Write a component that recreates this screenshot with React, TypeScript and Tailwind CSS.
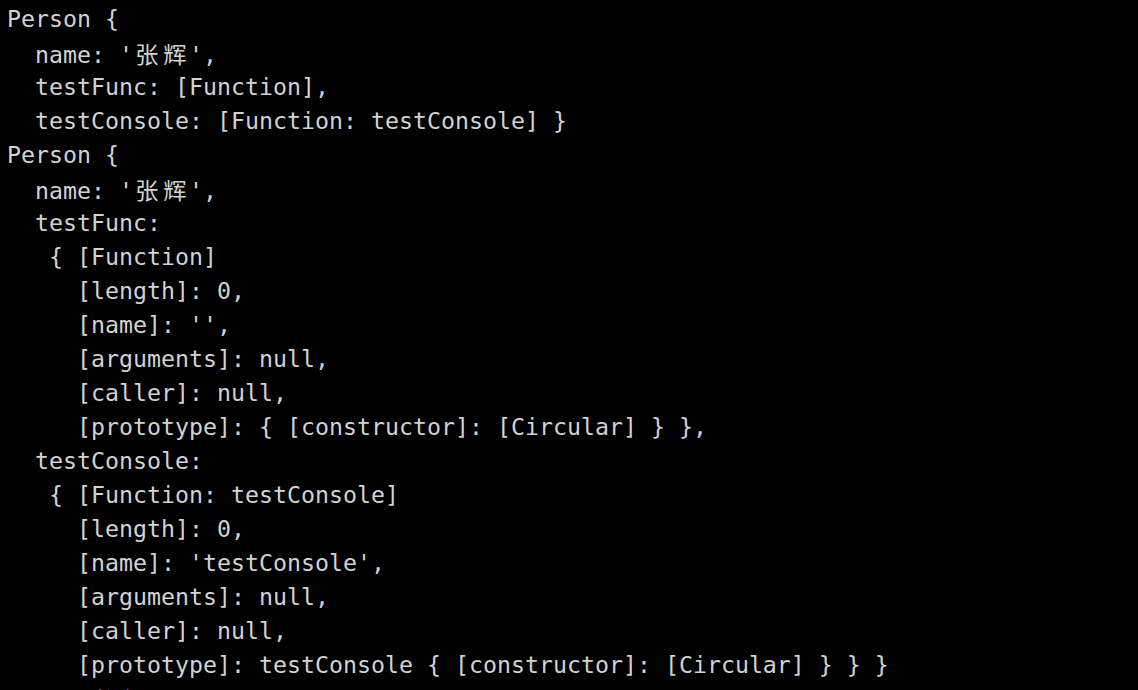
import React from "react";

const lines: string[] = [
  "Person {",
  "  name: '张辉',",
  "  testFunc: [Function],",
  "  testConsole: [Function: testConsole] }",
  "Person {",
  "  name: '张辉',",
  "  testFunc:",
  "   { [Function]",
  "     [length]: 0,",
  "     [name]: '',",
  "     [arguments]: null,",
  "     [caller]: null,",
  "     [prototype]: { [constructor]: [Circular] } },",
  "  testConsole:",
  "   { [Function: testConsole]",
  "     [length]: 0,",
  "     [name]: 'testConsole',",
  "     [arguments]: null,",
  "     [caller]: null,",
  "     [prototype]: testConsole { [constructor]: [Circular] } } }",
  "   ===数组",
];

function renderLine(s: string) {
  const parts: React.ReactNode[] = [];
  let buf = "";
  let k = 0;
  for (const ch of s) {
    if (/[\u4e00-\u9fff]/.test(ch)) {
      if (buf) {
        parts.push(<span key={k++}>{buf}</span>);
        buf = "";
      }
      parts.push(
        <span
          key={k++}
          className="inline-block w-[28px] text-center"
          style={{ fontFamily: '"Noto Sans CJK SC", sans-serif' }}
        >
          {ch}
        </span>
      );
    } else {
      buf += ch;
    }
  }
  if (buf) parts.push(<span key={k++}>{buf}</span>);
  return parts;
}

export default function App() {
  return (
    <div className="w-[1138px] h-[690px] overflow-hidden bg-black pt-[2px] pl-[7px]">
      <pre
        className="m-0 text-[23.25px] leading-[34px] text-[#d2d2d2] whitespace-pre"
        style={{ fontFamily: '"DejaVu Sans Mono", "Noto Sans CJK SC", monospace' }}
      >
        {lines.map((l, i) => (
          <div key={i} className="h-[34px]">
            {renderLine(l)}
          </div>
        ))}
      </pre>
    </div>
  );
}
